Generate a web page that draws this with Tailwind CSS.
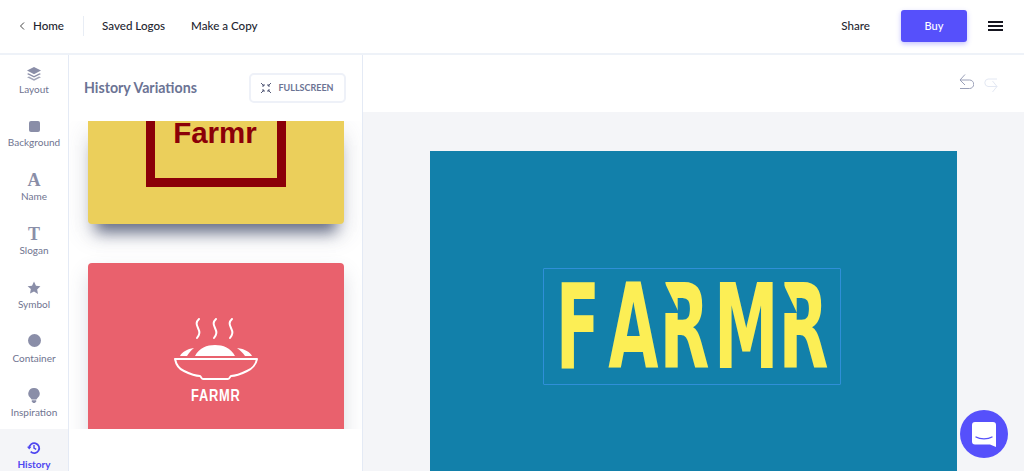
<!DOCTYPE html>
<html lang="en">
<head>
    <meta charset="UTF-8">
    <title>Logo Editor - History</title>
    <script src="https://cdn.jsdelivr.net/npm/@tailwindcss/browser@4"></script>
</head>
<body class="h-[471px] overflow-hidden bg-white font-['Lato',sans-serif] text-[#23252f]">
    <!-- top bar -->
    <header class="h-[55px] border-b-2 border-[#eef2f8] flex items-center pb-[1px] text-[11.6px] font-medium">
        <svg class="ml-[19px] w-[6px] h-[8px]" viewBox="0 0 6 8" fill="none" stroke="#444" stroke-width="1"><path d="M5 .5 1.5 4 5 7.5"/></svg>
        <span class="ml-[8px]">Home</span>
        <div class="ml-[19px] w-px h-[20px] bg-[#e8edf5]"></div>
        <span class="ml-[18px]">Saved Logos</span>
        <span class="ml-[26px]">Make a Copy</span>
        <span class="ml-auto">Share</span>
        <button class="ml-[31px] w-[66px] h-[32px] rounded-[3px] bg-[#5650fb] text-white text-[11px] shadow-[0_2px_5px_rgba(86,80,251,0.35)]">Buy</button>
        <div class="ml-[21px] mr-[21px] w-[15px] flex flex-col gap-[2px]">
            <div class="h-[2px] bg-[#15151f]"></div>
            <div class="h-[2px] bg-[#15151f]"></div>
            <div class="h-[2px] bg-[#15151f]"></div>
        </div>
    </header>

    <div class="flex h-[416px]">
        <!-- tool sidebar -->
        <nav class="w-[69px] shrink-0 border-r border-[#e4eaf5] text-[10px] text-[#6f7490] flex flex-col">
            <div class="h-[53.5px] pt-[12px] flex flex-col items-center">
                <svg class="w-[16px] h-[14px]" viewBox="0 0 16 14" fill="#8a8ea8"><path d="M8 0 15 3.6 8 7.2 1 3.6z"/><path d="M2.5 6.2 8 9l5.500-2.800L15 7 8 10.600 1 7z"/><path d="M3 9.400 8 12l5-2.600 2 .9-7 3.500-7-3.500z" opacity=".8"/></svg>
                <span class="mt-[1px] leading-[14px]">Layout</span>
            </div>
            <div class="h-[53.5px] pt-[12px] flex flex-col items-center">
                <div class="w-[11px] h-[11px] my-[1px] rounded-[2px] bg-[#8a8ea8]"></div>
                <span class="mt-[2px] leading-[14px]">Background</span>
            </div>
            <div class="h-[53.5px] pt-[9px] flex flex-col items-center">
                <span class="h-[18px] leading-[18px] text-[18px] font-bold text-[#8a8ea8] font-['Liberation_Serif',serif]">A</span>
                <span class="leading-[14px]">Name</span>
            </div>
            <div class="h-[53.5px] pt-[10px] flex flex-col items-center">
                <span class="h-[18px] leading-[18px] text-[18px] font-bold text-[#8a8ea8] font-['Liberation_Serif',serif]">T</span>
                <span class="leading-[14px]">Slogan</span>
            </div>
            <div class="h-[53.5px] pt-[12px] flex flex-col items-center">
                <svg class="w-[14px] h-[14px]" viewBox="0 0 24 24" fill="#8a8ea8"><path d="M12 1l3.400 7.200 7.600 1-5.600 5.400 1.400 7.800L12 18l-6.800 3.400 1.400-7.800L1 9.200l7.600-1z"/></svg>
                <span class="mt-[2px] leading-[14px]">Symbol</span>
            </div>
            <div class="h-[53.5px] pt-[11px] flex flex-col items-center">
                <div class="w-[13px] h-[13px] my-[1px] rounded-full bg-[#8a8ea8]"></div>
                <span class="mt-[3px] leading-[14px]">Container</span>
            </div>
            <div class="h-[53.5px] pt-[12px] flex flex-col items-center">
                <svg class="w-[12px] h-[15px]" viewBox="0 0 12 15" fill="#8a8ea8"><path d="M6 0a5.600 5.600 0 0 0-3.300 10.200c.5.4.8 1 .8 1.300h5c0-.3.3-.9.8-1.300A5.600 5.600 0 0 0 6 0z"/><path d="M3.800 12.300h4.400v1L7 15H5l-1.200-1.700z"/></svg>
                <span class="mt-[2px] leading-[14px]">Inspiration</span>
            </div>
            <div class="h-[42px] pt-[12px] bg-[#f4f5f8] flex flex-col items-center text-[#4f46f0] font-bold">
                <svg class="w-[14px] h-[14px]" viewBox="0 0 14 14" fill="none" stroke="#4f46f0" stroke-width="1.800"><path d="M2.200 7a5 5 0 1 1 1.500 3.700"/><path d="M7 4v3.200l2.200 1.200" stroke-width="1.400"/><path d="M0 5.800h4.400L2.200 8.400z" fill="#4f46f0" stroke="none"/></svg>
                <span class="mt-[2px] leading-[14px]">History</span>
            </div>
        </nav>

        <!-- history panel -->
        <section class="w-[294px] shrink-0 border-r border-[#e4eaf5] flex flex-col">
            <div class="h-[66px] shrink-0 flex items-center justify-between pl-[15px] pr-[16px]">
                <h2 class="text-[14.2px] font-bold text-[#6b7394]">History Variations</h2>
                <button class="w-[97px] h-[30px] border-2 border-[#eef1f8] rounded-[5px] flex items-center justify-center gap-[7px] text-[9px] font-bold text-[#6b7394]">
                    <svg class="w-[10px] h-[10px]" viewBox="0 0 10 10" fill="none" stroke="#555b78" stroke-width="1"><path d="M0 0 3 3M3 1v2H1M10 0 7 3M7 1v2h2M10 10 7 7M7 9V7h2M0 10 3 7M3 9V7H1"/></svg>
                    FULLSCREEN
                </button>
            </div>
            <div class="h-[308px] shrink-0 overflow-hidden px-[19px]">
                <div class="h-[103px] w-[256px] rounded-b-[4px] bg-[#ebcf5b] shadow-[0_16px_14px_-8px_rgba(60,70,100,0.75),0_10px_24px_rgba(70,80,110,0.18)] flex justify-center">
                    <div class="w-[140px] h-[66px] border-[9px] border-t-0 border-[#8b0008] flex justify-center">
                        <span class="mr-[2px] text-[29.500px] h-[28px] leading-[24px] font-bold text-[#8b0008] font-['Liberation_Sans',sans-serif]">Farmr</span>
                    </div>
                </div>
                <div class="mt-[39px] h-[240px] w-[256px] rounded-[4px] bg-[#e9616d] shadow-[0_10px_20px_rgba(70,80,110,0.2)] pt-[50px] flex flex-col items-center">
                    <svg class="w-[92px] h-[70px] shrink-0" viewBox="0 0 92 70" fill="none" stroke="#fff">
                        <g stroke-width="2" stroke-linecap="round"><path d="M29 6c-3 3-3 5-1 9s2 6-1 10"/><path d="M46 6c-3 3-3 5-1 9s2 6-1 10"/><path d="M62 6c-3 3-3 5-1 9s2 6-1 10"/></g>
                        <path fill="#fff" stroke="none" d="M25 43C29 35 37 32 45 32s16 3 20 11zM10 43c2-4 7-7 14-8-3 2-5 5-7 8zM82 43c-2-4-7-7-15-8 3 2 6 5 8 8z"/>
                        <path stroke-width="2" stroke-linejoin="round" d="M5 46h82c-1 5-5 10-10 12-6 3-12 5-16 5-1 0-1 3-3 3H33c-2 0-2-3-3-3-4 0-10-2-16-5-5-2-8-7-9-12z"/>
                    </svg>
                    <span class="mt-[3px] origin-center scale-x-[0.78] text-[16.500px] leading-[18px] font-bold tracking-[1px] text-white font-['Liberation_Sans',sans-serif]">FARMR</span>
                </div>
            </div>
        </section>

        <!-- canvas -->
        <main class="relative flex-1 min-w-0 bg-[#f4f5f8] overflow-hidden">
            <div class="h-[57px] bg-white flex items-center justify-end gap-[9px] pr-[26px]">
                <svg class="w-[15px] h-[15px] mb-[4px]" viewBox="0 0 15 15" fill="none" stroke="#9aa0b8" stroke-width="1"><path d="M6 .5 1 6l5 5M1 6h9.500a4.200 4.200 0 0 1 0 8.500H1"/></svg>
                <svg class="w-[15px] h-[15px] mt-[3px]" viewBox="0 0 15 15" fill="none" stroke="#e3e8f3" stroke-width="1"><path d="M14 1H5a3.800 3.800 0 0 0 0 7.500h9M9.500 3l4.500 5.500-4.500 5.500"/></svg>
            </div>
            <div class="mt-[39px] ml-[67px] w-[527px] h-[340px] bg-[#1280aa] pt-[117px] pl-[113px]">
                <div class="relative w-[298px] h-[117px] border border-[#2f8fd8] rounded-[1px] flex items-center justify-center">
                    <span class="shrink-0 whitespace-nowrap origin-center scale-x-[0.55] text-[118px] leading-none font-bold text-[#fcee55] font-['DejaVu_Sans',sans-serif]"><span class="tracking-[15px]">F</span><span class="tracking-[2px]">A</span><span class="tracking-[8px]">R</span><span class="tracking-[0px]">M</span><span>R</span></span>
                    <!-- stencil cuts over the wordmark -->
                    <svg class="absolute left-[-1px] top-[-1px] w-[298px] h-[117px]" viewBox="0 0 298 117" fill="#1280aa"><path d="M118 13H121L136 45H118zM236 13H239L254 45H236z"/></svg>
                </div>
            </div>
            <!-- chat bubble -->
            <button class="absolute left-[597px] top-[355px] w-[48px] h-[48px] rounded-full bg-[#5650fb] flex items-center justify-center">
                <svg class="w-[24px] h-[25px]" viewBox="0 0 24 25"><path fill="#fff" d="M3 0h18a3 3 0 0 1 3 3v22l-6-2.500H3a3 3 0 0 1-3-3V3a3 3 0 0 1 3-3z"/><path fill="none" stroke="#5650fb" stroke-width="1.400" stroke-linecap="round" d="M4 15c4 2.500 12 2.500 16 0"/></svg>
            </button>
        </main>
    </div>
</body>
</html>
